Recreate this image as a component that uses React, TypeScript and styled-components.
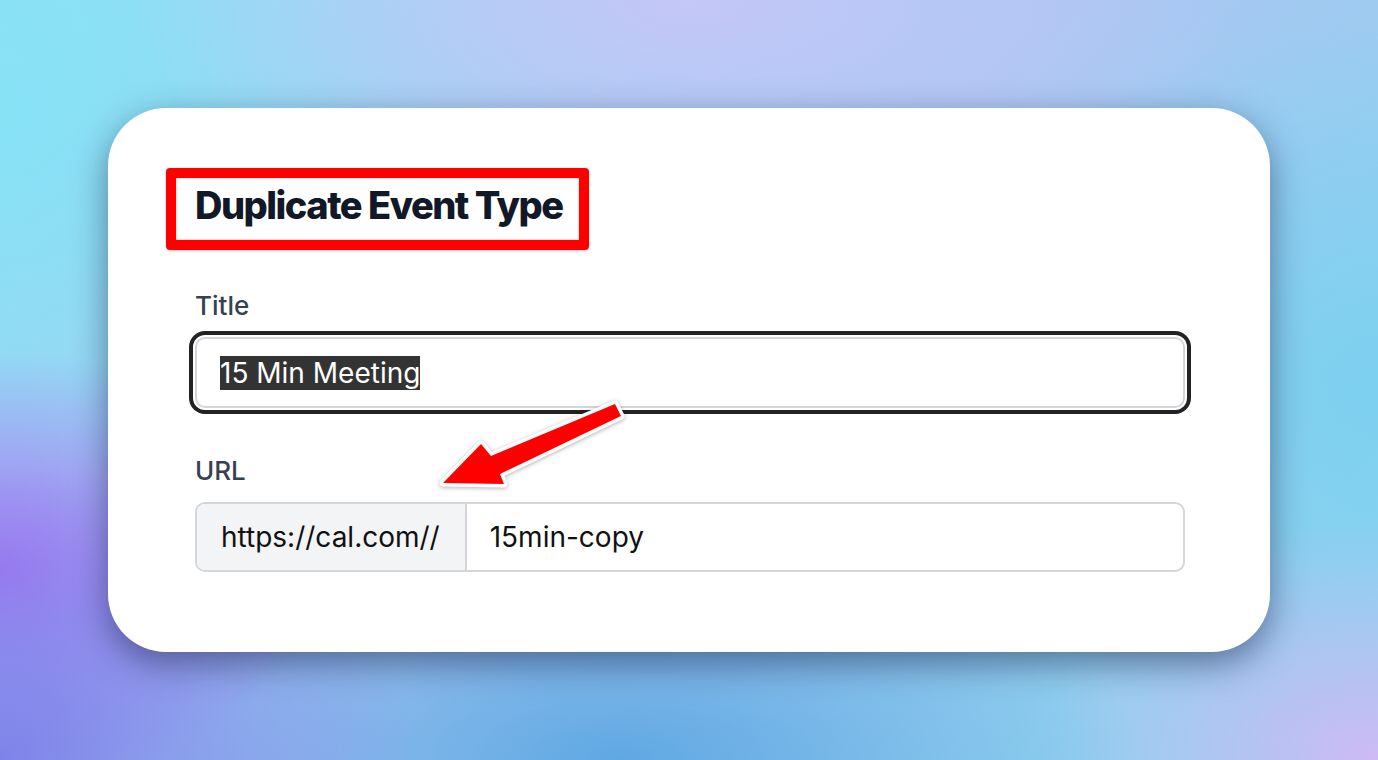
import React from "react";
import styled, { createGlobalStyle } from "styled-components";

const GlobalStyle = createGlobalStyle`
  html, body {
    margin: 0;
    padding: 0;
  }
  body {
    font-family: Inter, "Noto Sans", "Liberation Sans", sans-serif;
    -webkit-font-smoothing: antialiased;
  }
`;

const Page = styled.div`
  box-sizing: border-box;
  width: 1378px;
  height: 760px;
  overflow: hidden;
  padding: 108px;
  background:
    radial-gradient(ellipse 420px 300px at 0% 100%, rgba(122, 124, 232, 0.9), transparent),
    radial-gradient(ellipse 320px 220px at 0% 75%, rgba(164, 116, 242, 0.95), transparent),
    radial-gradient(ellipse 520px 220px at 45% 100%, rgba(92, 166, 226, 0.95), transparent),
    radial-gradient(ellipse 340px 240px at 100% 100%, rgba(210, 184, 244, 0.95), transparent),
    radial-gradient(ellipse 420px 360px at 100% 50%, rgba(122, 208, 240, 0.9), transparent),
    radial-gradient(ellipse 560px 240px at 50% 0%, rgba(198, 198, 248, 0.95), transparent),
    radial-gradient(ellipse 420px 380px at 0% 15%, rgba(134, 226, 246, 0.95), transparent),
    linear-gradient(135deg, #90dff3 0%, #a9c6f2 50%, #86d6ee 100%);
`;

const Card = styled.div`
  position: relative;
  box-sizing: border-box;
  width: 1162px;
  height: 544px;
  padding: 60px 85px 80px 87px;
  background: #fff;
  border-radius: 58px;
  box-shadow: 0 12px 34px rgba(20, 30, 70, 0.5);
  display: flex;
  flex-direction: column;
`;

const HeadingBox = styled.div`
  align-self: flex-start;
  box-sizing: border-box;
  height: 82px;
  margin-left: -29px;
  margin-bottom: 40px;
  padding: 0 16px 8px 19px;
  display: flex;
  align-items: center;
  border: 10px solid #ff0000;
  border-radius: 4px;
  box-shadow: inset 0 0 3px rgba(0, 0, 0, 0.25), 0 1px 3px rgba(0, 0, 0, 0.2);
`;

const Heading = styled.h1`
  margin: 0;
  font-size: 38px;
  font-weight: 800;
  letter-spacing: -1.5px;
  color: #111827;
  line-height: 1;
`;

const Form = styled.div`
  display: flex;
  flex-direction: column;
  gap: 47px;
`;

const Field = styled.div`
  display: flex;
  flex-direction: column;
  gap: 15px;
`;

const Label = styled.label`
  font-size: 26px;
  line-height: 32px;
  font-weight: 500;
  color: #374151;
`;

const TextBox = styled.div<{ $focused?: boolean }>`
  box-sizing: border-box;
  height: ${(p) => (p.$focused ? 71 : 70)}px;
  display: flex;
  align-items: stretch;
  border: 2px solid #d4d6db;
  border-radius: 10px;
  overflow: hidden;
  background: #fff;
  box-shadow: ${(p) =>
    p.$focused ? "0 0 0 2px #fff, 0 0 0 6px #222" : "none"};
  font-size: 28px;
  color: #111;
`;

const Value = styled.div`
  flex: 1;
  display: flex;
  align-items: center;
  padding-left: 23px;
`;

const Selected = styled.span`
  background: #333;
  color: #fff;
  line-height: 34px;
`;

const Prefix = styled.div`
  display: flex;
  align-items: center;
  padding: 0 25px 0 24px;
  background: #f3f4f6;
  border-right: 2px solid #d4d6db;
`;

const Arrow = styled.svg`
  position: absolute;
  left: 322px;
  top: 282px;
  overflow: visible;
  filter: drop-shadow(0 1px 2px rgba(0, 0, 0, 0.3));
`;

export default function App() {
  return (
    <>
      <GlobalStyle />
      <Page>
        <Card>
          <HeadingBox>
            <Heading>Duplicate Event Type</Heading>
          </HeadingBox>
          <Form>
            <Field>
              <Label>Title</Label>
              <TextBox $focused>
                <Value>
                  <Selected>15 Min Meeting</Selected>
                </Value>
              </TextBox>
            </Field>
            <Field>
              <Label>URL</Label>
              <TextBox>
                <Prefix>https://cal.com//</Prefix>
                <Value>15min-copy</Value>
              </TextBox>
            </Field>
          </Form>
          <Arrow width="210" height="110" viewBox="0 0 210 110">
            <polygon
              points="13,93 51,54 61,66 185,14 191,26 70,84 74,94"
              fill="#ff0000"
              stroke="#fff"
              strokeWidth="7"
              strokeLinejoin="round"
              paintOrder="stroke"
            />
          </Arrow>
        </Card>
      </Page>
    </>
  );
}
